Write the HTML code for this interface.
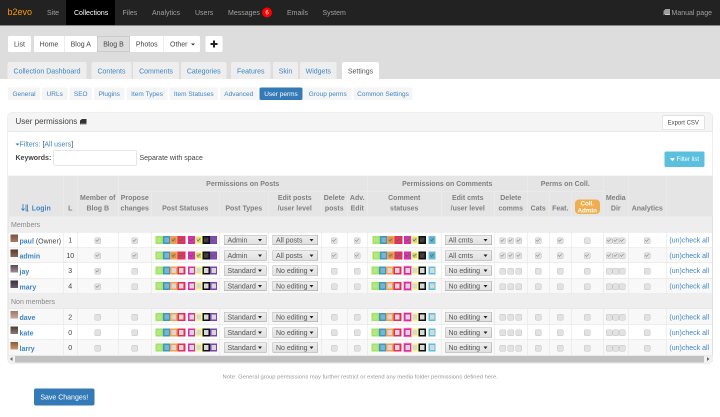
<!DOCTYPE html>
<html><head><meta charset="utf-8"><title>User permissions</title>
<style>
html,body{margin:0;padding:0;width:720px;height:417px;overflow:hidden;background:#fff}
#r{position:absolute;left:0;top:0;width:1440px;height:834px;overflow:hidden;transform:scale(.5);transform-origin:0 0;font:14px/20px "Liberation Sans",sans-serif;color:#444;background:#fff;filter:blur(.7px)}
#r a{color:#3f85c2;text-decoration:none}
.a{position:absolute;white-space:nowrap}
.n{top:15px;color:#a0a0a0}
.b{position:absolute;top:72px;height:32px;line-height:32px;text-align:center;background:#fff;color:#444}
.t{position:absolute;top:124px;height:34px;line-height:36px;text-align:center;background:#eee;color:#3f85c2;border-radius:4px 4px 0 0}
.u{position:absolute;top:175px;height:25px;line-height:25px;text-align:center;background:#f5f5f5;color:#3f85c2;font-size:13px;border-radius:3px}
table{position:absolute;left:16px;top:351px;width:1408px;table-layout:fixed;border-collapse:collapse}
td,th{padding:0;border:1px solid #e2e2e2;text-align:center;vertical-align:middle;overflow:hidden;white-space:nowrap;color:#444;font-weight:normal}
th{background:#e5e5e5;color:#808080;font-weight:bold;vertical-align:bottom;padding-bottom:6px;line-height:21px;border-color:#eee}
th.g{vertical-align:middle;padding:0}
tr.z td{background:#f8f8f8}
tr.h td{background:#eee;text-align:left;padding-left:5px;color:#888}
td.l{text-align:left;padding-left:4px}
.av{display:inline-block;width:15px;height:15px;vertical-align:3px;margin-right:3px}
td a{font-weight:normal}
td.l a{font-weight:bold}
.c{display:inline-block;position:relative;width:13px;height:13px;box-sizing:border-box;background:#e2e2e2;border:1px solid #c4c4c4;border-radius:3px;vertical-align:middle}
.c.y::after,.s.x::before{content:"";position:absolute;width:3px;height:6px;border:solid #777;border-width:0 1.6px 1.6px 0;transform:rotate(45deg);left:3px;top:0}
.c3 .c{margin:0 1.7px}
.m3 .c{margin:0 0}
.st{display:flex;height:16px;align-items:center}
.s{display:block;position:relative;width:14.7px;height:16px;flex:none}
.s::after{content:"";position:absolute;left:3px;top:3px;width:9px;height:10px;background:#d8d8d8;z-index:0}
.s.x::after{background:rgba(130,130,130,.35)}
.s.x::before{z-index:1;left:5px;top:3px;border-color:#555}
.s.ga{background:#a1e45c}.s.ga::after{background:#b7e58c}
.s.bl{background:#3a98c6}.s.bl::after{background:#7fb2cc}
.s.or{background:#f8a048}
.s.re{background:#e62c5c;width:15.5px}
.s.ma{background:#e026b0}
.s.ye{background:#f8f78a}
.s.bk{background:#111}
.s.pu{background:#7c42b8}
.s.lb{background:#5bc0de}
.s.gl{box-shadow:0 0 0 1.5px #ff9db0;z-index:1}
.sel{display:block;position:relative;height:20px;line-height:19px;box-sizing:border-box;background:linear-gradient(#eee,#e0e0e0);border:1px solid #b0b0b0;border-right-color:#999;border-bottom-color:#999;text-align:left;padding-left:6px;color:#555;border-radius:1px}
.sel::after{content:"";position:absolute;right:8px;top:7px;border:4px solid transparent;border-top:5px solid #222;border-bottom:0}
.w1{width:85px;margin-left:9px}.w2{width:91px;margin-left:8px}.w3{width:94px;margin-left:7px}
</style></head><body><div id="r">

<div class="a" style="left:0;top:0;width:1440px;height:50px;background:#222;border-bottom:2px solid #888"></div>
<div class="a" style="left:0;top:52px;width:1440px;height:106px;background:#ddd"></div>
<div class="a" style="left:132px;top:0;width:98px;height:50px;background:#000"></div>
<div class="a" style="left:15px;top:14px;color:#f90;font-size:18px">b2evo</div>
<div class="a n" style="left:94px">Site</div>
<div class="a n" style="left:148px;color:#fff">Collections</div>
<div class="a n" style="left:245px">Files</div>
<div class="a n" style="left:304px">Analytics</div>
<div class="a n" style="left:390px">Users</div>
<div class="a n" style="left:456px">Messages</div>
<div class="a" style="left:524px;top:15px;width:20px;height:20px;border-radius:10px;background:#f00;color:#fff;font-size:12px;text-align:center">6</div>
<div class="a n" style="left:574px">Emails</div>
<div class="a n" style="left:645px">System</div>
<svg class="a" style="left:1327px;top:17px" width="14" height="15" viewBox="0 0 14 15"><path d="M4 1h9v10H2L0 14V5z" fill="#9d9d9d"/><path d="M3 11h10v2H2z" fill="#ccc"/></svg>
<div class="a n" style="left:1343px">Manual page</div>

<div class="b" style="left:16px;width:46px;border-radius:3px">List</div>
<div class="b" style="left:68px;width:60px;border-radius:3px 0 0 3px">Home</div>
<div class="b" style="left:129px;width:65px">Blog A</div>
<div class="b" style="left:194px;height:30px;line-height:30px;background:#ddd;border:1px solid #bbb;box-sizing:content-box;width:64px">Blog B</div>
<div class="b" style="left:260px;width:67px">Photos</div>
<div class="b" style="left:328px;width:72px;border-radius:0 3px 3px 0;text-align:left;text-indent:12px">Other<span class="a" style="left:54px;top:15px;border:4px solid transparent;border-top:4px solid #333;border-bottom:0"></span></div>
<div class="b" style="left:411px;width:34px;border-radius:3px"><span class="a" style="left:10px;top:14px;width:14px;height:4px;background:#222"></span><span class="a" style="left:15px;top:9px;width:4px;height:14px;background:#222"></span></div>

<div class="t" style="left:15px;width:158px">Collection Dashboard</div>
<div class="t" style="left:183px;width:80px">Contents</div>
<div class="t" style="left:266px;width:92px">Comments</div>
<div class="t" style="left:362px;width:91px">Categories</div>
<div class="t" style="left:462px;width:79px">Features</div>
<div class="t" style="left:546px;width:50px">Skin</div>
<div class="t" style="left:600px;width:73px">Widgets</div>
<div class="t" style="left:684px;width:74px;background:#fff;color:#555;height:36px">Settings</div>

<div class="u" style="left:16px;width:64px">General</div>
<div class="u" style="left:84px;width:51px">URLs</div>
<div class="u" style="left:139px;width:45px">SEO</div>
<div class="u" style="left:188px;width:61px">Plugins</div>
<div class="u" style="left:253px;width:82px">Item Types</div>
<div class="u" style="left:339px;width:97px">Item Statuses</div>
<div class="u" style="left:440px;width:75px">Advanced</div>
<div class="u" style="left:519px;width:86px;background:#337ab7;color:#fff">User perms</div>
<div class="u" style="left:608px;width:95px">Group perms</div>
<div class="u" style="left:707px;width:118px">Common Settings</div>

<div class="a" style="left:15px;top:225px;width:1411px;height:502px;box-sizing:border-box;border:1px solid #ddd;border-radius:8px;background:#fff"></div>
<div class="a" style="left:16px;top:226px;width:1409px;height:37px;background:#f5f5f5;border-bottom:1px solid #ddd;border-radius:7px 7px 0 0"></div>
<div class="a" style="left:31px;top:234px;font-size:16px;color:#444">User permissions</div>
<svg class="a" style="left:160px;top:237px" width="14" height="14" viewBox="0 0 14 14"><path d="M4 1h9v9H2L0 13V4z" fill="#333"/><path d="M3 10h10v2H2z" fill="#888"/></svg>
<div class="a" style="left:1324px;top:231px;width:85px;height:29px;box-sizing:border-box;border:1px solid #ccc;background:#fff;border-radius:3px;text-align:center;line-height:27px;font-size:12px">Export CSV</div>

<div class="a" style="left:31px;top:278px"><span style="display:inline-block;border:4px solid transparent;border-top:4px solid #337ab7;border-bottom:0;vertical-align:2px"></span><a>Filters:</a> [<a>All users</a>]</div>
<div class="a" style="left:31px;top:305px;font-weight:bold">Keywords:</div>
<div class="a" style="left:106px;top:300px;width:168px;height:31px;box-sizing:border-box;border:1px solid #ccc;border-radius:4px;background:#fff"></div>
<div class="a" style="left:279px;top:305px">Separate with space</div>
<div class="a" style="left:1329px;top:303px;width:80px;height:31px;background:#5bc0de;border-radius:3px;color:#fff;font-size:12px;line-height:31px;text-align:center"><span style="display:inline-block;border:5px solid transparent;border-top:7px solid #fff;border-bottom:0;vertical-align:-1px"></span> Filter list</div>

<table>
<colgroup><col style="width:110px"><col style="width:28px"><col style="width:82px"><col style="width:66px"><col style="width:136px"><col style="width:98px"><col style="width:106px"><col style="width:52px"><col style="width:40px"><col style="width:148px"><col style="width:106px"><col style="width:66px"><col style="width:44px"><col style="width:44px"><col style="width:64px"><col style="width:50px"><col style="width:76px"><col style="width:92px"></colgroup>
<tr style="height:32px">
<th rowspan="2"><a style="font-weight:bold"><svg width="18" height="15" viewBox="0 0 18 15" style="vertical-align:-2px"><path d="M4 0v12M1 9l3 4 3-4" fill="none" stroke="#337ab7" stroke-width="1.6"/><path d="M10 1v13M13 1v13M10 14h5" fill="none" stroke="#337ab7" stroke-width="1.6"/></svg> Login</a></th>
<th rowspan="2">L</th>
<th rowspan="2">Member of<br>Blog B</th>
<th colspan="6" class="g">Permissions on Posts</th>
<th colspan="3" class="g">Permissions on Comments</th>
<th colspan="3" class="g">Perms on Coll.</th>
<th rowspan="2">Media<br>Dir</th>
<th rowspan="2">Analytics</th>
<th rowspan="2"></th>
</tr>
<tr style="height:50px">
<th>Propose<br>changes</th><th>Post Statuses</th><th>Post Types</th><th>Edit posts<br>/user level</th><th>Delete<br>posts</th><th>Adv.<br>Edit</th>
<th>Comment<br>statuses</th><th>Edit cmts<br>/user level</th><th>Delete<br>comms</th>
<th>Cats</th><th>Feat.</th><th><span style="display:inline-block;width:50px;height:29px;border-radius:8px;background:#f0ad4e;color:#fff;font-size:12.5px;line-height:14px;padding-top:1px;box-sizing:border-box;vertical-align:bottom;margin-bottom:-1px">Coll.<br>Admin</span></th>
</tr>

<tr class="h" style="height:31px"><td colspan="18">Members</td></tr>

<tr style="height:31px">
<td class="l"><span class="av" style="background:linear-gradient(#7a5040,#a97a62)"></span><a>paul</a> (Owner)</td><td>1</td><td><b class="c y"></b></td><td><b class="c y"></b></td>
<td><div class="st" style="padding-left:8px"><i class="s ga"></i><i class="s bl"></i><i class="s or x"></i><i class="s re x"></i><i class="s ma x" style="margin-left:5px"></i><i class="s ye x"></i><i class="s bk x"></i><i class="s pu x"></i></div></td>
<td><span class="sel w1">Admin</span></td><td><span class="sel w2">All posts</span></td><td><b class="c y"></b></td><td><b class="c y"></b></td>
<td><div class="st" style="padding-left:10px"><i class="s ga"></i><i class="s bl"></i><i class="s or x"></i><i class="s re x"></i><i class="s ma x" style="margin-left:3px"></i><i class="s ye x"></i><i class="s bk x"></i><i class="s lb x" style="margin-left:5px"></i></div></td>
<td><span class="sel w3">All cmts</span></td><td class="c3"><b class="c y"></b><b class="c y"></b><b class="c y"></b></td>
<td><b class="c y"></b></td><td><b class="c y"></b></td><td><b class="c"></b></td><td class="m3"><b class="c y"></b><b class="c y"></b><b class="c y"></b></td><td><b class="c y"></b></td><td><a>(un)check all</a></td>
</tr>

<tr class="z" style="height:30px">
<td class="l"><span class="av" style="background:linear-gradient(#5a3a30,#8a6a5a)"></span><a>admin</a></td><td>10</td><td><b class="c y"></b></td><td><b class="c y"></b></td>
<td><div class="st" style="padding-left:8px"><i class="s ga"></i><i class="s bl"></i><i class="s or x"></i><i class="s re x"></i><i class="s ma x" style="margin-left:5px"></i><i class="s ye x"></i><i class="s bk x"></i><i class="s pu x"></i></div></td>
<td><span class="sel w1">Admin</span></td><td><span class="sel w2">All posts</span></td><td><b class="c y"></b></td><td><b class="c y"></b></td>
<td><div class="st" style="padding-left:10px"><i class="s ga"></i><i class="s bl"></i><i class="s or x"></i><i class="s re x"></i><i class="s ma x" style="margin-left:3px"></i><i class="s ye x"></i><i class="s bk x"></i><i class="s lb x" style="margin-left:5px"></i></div></td>
<td><span class="sel w3">All cmts</span></td><td class="c3"><b class="c y"></b><b class="c y"></b><b class="c y"></b></td>
<td><b class="c y"></b></td><td><b class="c y"></b></td><td><b class="c y"></b></td><td class="m3"><b class="c y"></b><b class="c y"></b><b class="c y"></b></td><td><b class="c y"></b></td><td><a>(un)check all</a></td>
</tr>

<tr style="height:31px">
<td class="l"><span class="av" style="background:linear-gradient(#5a4a58,#a08a98)"></span><a>jay</a></td><td>3</td><td><b class="c y"></b></td><td><b class="c"></b></td>
<td><div class="st" style="padding-left:8px"><i class="s ga"></i><i class="s bl"></i><i class="s or"></i><i class="s re"></i><i class="s ma" style="margin-left:5px"></i><i class="s ye"></i><i class="s bk"></i><i class="s pu"></i></div></td>
<td><span class="sel w1">Standard</span></td><td><span class="sel w2">No editing</span></td><td><b class="c"></b></td><td><b class="c"></b></td>
<td><div class="st" style="padding-left:8px"><i class="s ga"></i><i class="s bl"></i><i class="s or"></i><i class="s re"></i><i class="s ma gl" style="margin-left:5px"></i><i class="s ye"></i><i class="s bk"></i><i class="s lb" style="margin-left:5px"></i></div></td>
<td><span class="sel w3">No editing</span></td><td class="c3"><b class="c"></b><b class="c"></b><b class="c"></b></td>
<td><b class="c"></b></td><td><b class="c"></b></td><td><b class="c"></b></td><td class="m3"><b class="c"></b><b class="c"></b><b class="c"></b></td><td><b class="c"></b></td><td><a>(un)check all</a></td>
</tr>

<tr class="z" style="height:31px">
<td class="l"><span class="av" style="background:linear-gradient(#3a3040,#6a5a70)"></span><a>mary</a></td><td>4</td><td><b class="c y"></b></td><td><b class="c"></b></td>
<td><div class="st" style="padding-left:8px"><i class="s ga"></i><i class="s bl"></i><i class="s or"></i><i class="s re"></i><i class="s ma" style="margin-left:5px"></i><i class="s ye"></i><i class="s bk"></i><i class="s pu"></i></div></td>
<td><span class="sel w1">Standard</span></td><td><span class="sel w2">No editing</span></td><td><b class="c"></b></td><td><b class="c"></b></td>
<td><div class="st" style="padding-left:8px"><i class="s ga"></i><i class="s bl"></i><i class="s or"></i><i class="s re"></i><i class="s ma gl" style="margin-left:5px"></i><i class="s ye"></i><i class="s bk"></i><i class="s lb" style="margin-left:5px"></i></div></td>
<td><span class="sel w3">No editing</span></td><td class="c3"><b class="c"></b><b class="c"></b><b class="c"></b></td>
<td><b class="c"></b></td><td><b class="c"></b></td><td><b class="c"></b></td><td class="m3"><b class="c"></b><b class="c"></b><b class="c"></b></td><td><b class="c"></b></td><td><a>(un)check all</a></td>
</tr>

<tr class="h" style="height:30px"><td colspan="18">Non members</td></tr>

<tr class="z" style="height:32px">
<td class="l"><span class="av" style="background:linear-gradient(#9a7a6a,#c8a898)"></span><a>dave</a></td><td>2</td><td><b class="c"></b></td><td><b class="c"></b></td>
<td><div class="st" style="padding-left:8px"><i class="s ga"></i><i class="s bl"></i><i class="s or"></i><i class="s re"></i><i class="s ma" style="margin-left:5px"></i><i class="s ye"></i><i class="s bk"></i><i class="s pu"></i></div></td>
<td><span class="sel w1">Standard</span></td><td><span class="sel w2">No editing</span></td><td><b class="c"></b></td><td><b class="c"></b></td>
<td><div class="st" style="padding-left:8px"><i class="s ga"></i><i class="s bl"></i><i class="s or"></i><i class="s re"></i><i class="s ma gl" style="margin-left:5px"></i><i class="s ye"></i><i class="s bk"></i><i class="s lb" style="margin-left:5px"></i></div></td>
<td><span class="sel w3">No editing</span></td><td class="c3"><b class="c"></b><b class="c"></b><b class="c"></b></td>
<td><b class="c"></b></td><td><b class="c"></b></td><td><b class="c"></b></td><td class="m3"><b class="c"></b><b class="c"></b><b class="c"></b></td><td><b class="c"></b></td><td><a>(un)check all</a></td>
</tr>

<tr style="height:30px">
<td class="l"><span class="av" style="background:linear-gradient(#4a3a35,#8a7a75)"></span><a>kate</a></td><td>0</td><td><b class="c"></b></td><td><b class="c"></b></td>
<td><div class="st" style="padding-left:8px"><i class="s ga"></i><i class="s bl"></i><i class="s or"></i><i class="s re"></i><i class="s ma" style="margin-left:5px"></i><i class="s ye"></i><i class="s bk"></i><i class="s pu"></i></div></td>
<td><span class="sel w1">Standard</span></td><td><span class="sel w2">No editing</span></td><td><b class="c"></b></td><td><b class="c"></b></td>
<td><div class="st" style="padding-left:8px"><i class="s ga"></i><i class="s bl"></i><i class="s or"></i><i class="s re"></i><i class="s ma gl" style="margin-left:5px"></i><i class="s ye"></i><i class="s bk"></i><i class="s lb" style="margin-left:5px"></i></div></td>
<td><span class="sel w3">No editing</span></td><td class="c3"><b class="c"></b><b class="c"></b><b class="c"></b></td>
<td><b class="c"></b></td><td><b class="c"></b></td><td><b class="c"></b></td><td class="m3"><b class="c"></b><b class="c"></b><b class="c"></b></td><td><b class="c"></b></td><td><a>(un)check all</a></td>
</tr>

<tr class="z" style="height:31px">
<td class="l"><span class="av" style="background:linear-gradient(#8a5a35,#c89a70)"></span><a>larry</a></td><td>0</td><td><b class="c"></b></td><td><b class="c"></b></td>
<td><div class="st" style="padding-left:8px"><i class="s ga"></i><i class="s bl"></i><i class="s or"></i><i class="s re"></i><i class="s ma" style="margin-left:5px"></i><i class="s ye"></i><i class="s bk"></i><i class="s pu"></i></div></td>
<td><span class="sel w1">Standard</span></td><td><span class="sel w2">No editing</span></td><td><b class="c"></b></td><td><b class="c"></b></td>
<td><div class="st" style="padding-left:8px"><i class="s ga"></i><i class="s bl"></i><i class="s or"></i><i class="s re"></i><i class="s ma gl" style="margin-left:5px"></i><i class="s ye"></i><i class="s bk"></i><i class="s lb" style="margin-left:5px"></i></div></td>
<td><span class="sel w3">No editing</span></td><td class="c3"><b class="c"></b><b class="c"></b><b class="c"></b></td>
<td><b class="c"></b></td><td><b class="c"></b></td><td><b class="c"></b></td><td class="m3"><b class="c"></b><b class="c"></b><b class="c"></b></td><td><b class="c"></b></td><td><a>(un)check all</a></td>
</tr>
</table>

<div class="a" style="left:16px;top:711px;width:1408px;height:15px;background:#f1f1f1"></div>
<div class="a" style="left:30px;top:712px;width:1378px;height:13px;background:#c1c1c1"></div>
<div class="a" style="left:20px;top:714px;border:4px solid transparent;border-right:5px solid #666;border-left:0"></div>
<div class="a" style="left:1414px;top:714px;border:4px solid transparent;border-left:5px solid #666;border-right:0"></div>

<div class="a" style="left:445px;top:744px;font-size:11.7px;color:#999">Note: General group permissions may further restrict or extend any media folder permissions defined here.</div>
<div class="a" style="left:68px;top:777px;width:121px;height:34px;background:#337ab7;border-radius:4px;color:#fff;text-align:center;line-height:34px">Save Changes!</div>
</div></body></html>
